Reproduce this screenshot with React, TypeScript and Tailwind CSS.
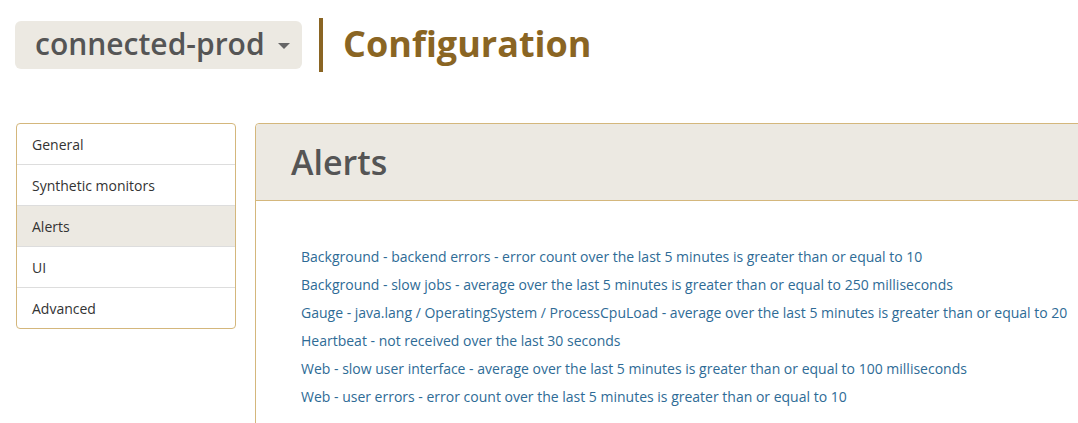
const alerts = [
  "Background - backend errors - error count over the last 5 minutes is greater than or equal to 10",
  "Background - slow jobs - average over the last 5 minutes is greater than or equal to 250 milliseconds",
  "Gauge - java.lang / OperatingSystem / ProcessCpuLoad - average over the last 5 minutes is greater than or equal to 20",
  "Heartbeat - not received over the last 30 seconds",
  "Web - slow user interface - average over the last 5 minutes is greater than or equal to 100 milliseconds",
  "Web - user errors - error count over the last 5 minutes is greater than or equal to 10",
];

const navItems = ["General", "Synthetic monitors", "Alerts", "UI", "Advanced"];

export default function App() {
  return (
    <div
      className="w-[1078px] h-[423px] overflow-hidden bg-white text-[#333]"
      style={{ fontFamily: '"Open Sans", sans-serif' }}
    >
      {/* header */}
      <div className="flex items-center pt-[18px] pl-[15px] h-[72px]">
        <button className="flex items-center h-[48px] w-[287px] rounded-[6px] bg-[#ece9e2] pl-[20px] text-[30px] font-semibold text-[#555] leading-none">
          <span className="mt-[-2px]">connected-prod</span>
          <span className="ml-[13px] mt-[2px] w-0 h-0 border-l-[6px] border-r-[6px] border-t-[6px] border-l-transparent border-r-transparent border-t-[#666]" />
        </button>
        <div className="ml-[17px] w-[4px] h-[54px] bg-[#8a6523] self-start" />
        <h1 className="ml-[20px] text-[36px] font-bold text-[#8a6523] leading-none mt-[-3px]">
          Configuration
        </h1>
      </div>

      <div className="flex items-start mt-[51px] pl-[16px]">
        {/* sidebar */}
        <div className="w-[220px] shrink-0 rounded-[4px] border border-[#d4b77c] bg-white overflow-hidden">
          {navItems.map((item, i) => (
            <div
              key={item}
              className={
                "flex items-center pl-[15px] text-[14px] " +
                (i > 0 ? "h-[41px] border-t border-[#dddddd] " : "h-[40px] ") +
                (item === "Alerts" ? "bg-[#ece9e2]" : "")
              }
            >
              {item}
            </div>
          ))}
        </div>

        {/* main panel */}
        <div className="ml-[19px] w-[900px] shrink-0 rounded-[4px] border border-[#d4b77c] bg-white h-[320px]">
          <div className="h-[77px] bg-[#ece9e2] border-b border-[#d4b77c] flex items-center pl-[35px] rounded-t-[4px]">
            <h2 className="text-[34px] font-semibold text-[#555] leading-none">Alerts</h2>
          </div>
          <ul className="pt-[41px] pl-[45px]">
            {alerts.map((a) => (
              <li key={a} className="h-[28px] flex items-center text-[14px]">
                <a className="text-[#2e6b96]">{a}</a>
              </li>
            ))}
          </ul>
        </div>
      </div>
    </div>
  );
}
